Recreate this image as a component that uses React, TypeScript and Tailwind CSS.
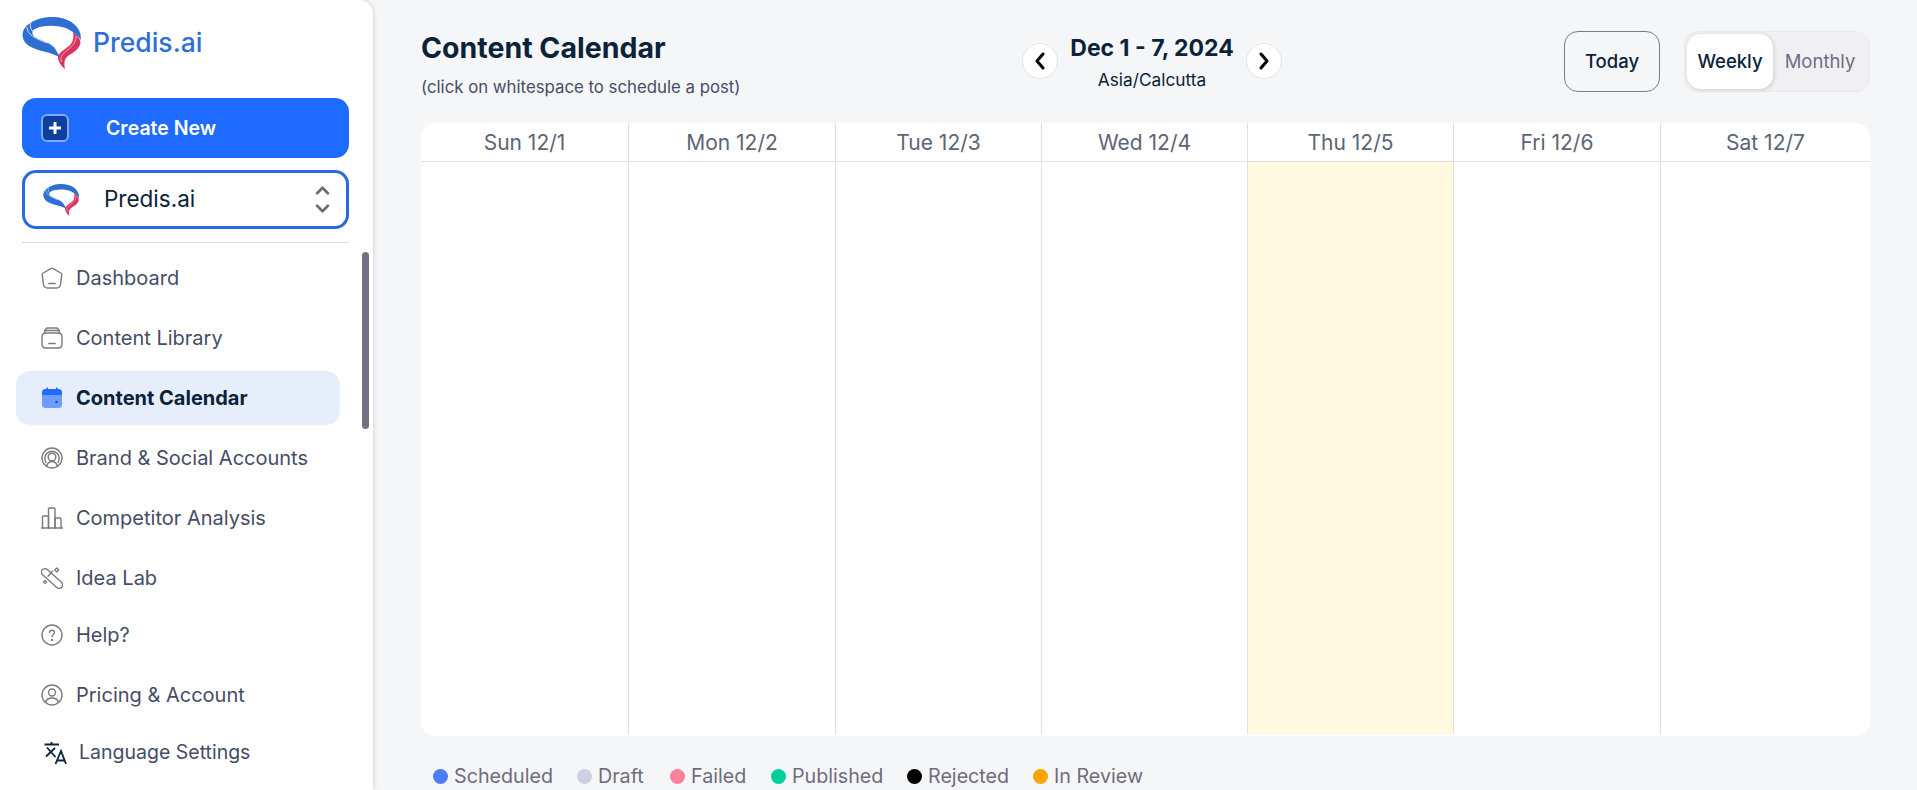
import React from "react";

const font = { fontFamily: "Inter, 'Liberation Sans', sans-serif" };

function Logo({ className }: { className: string }) {
  return (
    <svg viewBox="4 5 62 52" className={className}>
      <path d="M4.500 23C4.500 14 15 7.500 27 5.500C42 3 59 8.500 62.500 22L63 28C60 24 56 20 50 17C40 12.500 24 13 17 17C13.500 19 13.500 22 17 25C24 29 34 31 38 38L43 47C38 42 30 40.500 22 38.500C12 35.500 4.500 31 4.500 23Z" fill="#2f6fd3" />
      <path d="M9 15C9 24 20 27 29 31M13 10C9 20 22 24 33 30" stroke="#ffffff" strokeWidth="0.9" fill="none" opacity="0.85" />
      <path d="M55 20C59 23 62.500 27 62.500 31C61 38 54 41 50 44C46 47 46 51 47 57C43 54 40 49 40 45C41 40 48 37 52 33C55 30 56 25 55 20Z" fill="#d9345f" />
      <path d="M58 24C59 32 50 37 46 41C43 44 42.500 47 43.500 50" stroke="#ffffff" strokeWidth="0.8" fill="none" opacity="0.7" />
    </svg>
  );
}

const stroke = { fill: "none", stroke: "#7b7b7f", strokeWidth: 1.4, strokeLinecap: "round" as const, strokeLinejoin: "round" as const };

function NavIcon({ name }: { name: string }) {
  if (name === "dash")
    return (
      <svg viewBox="0 0 22 22" className="h-[22px] w-[22px]" {...stroke}>
        <path d="M9.800 1.600Q11 0.800 12.200 1.600L19.800 6Q21 6.800 20.700 8.200L19.500 17.500Q19 21 15.500 21H6.500Q3 21 2.500 17.500L1.300 8.200Q1 6.800 2.200 6Z" />
        <path d="M8 16.500H14" strokeWidth="1.700" />
      </svg>
    );
  if (name === "lib")
    return (
      <svg viewBox="0 0 22 22" className="h-[22px] w-[22px]" {...stroke}>
        <path d="M3.500 5.500Q4 1 7 1H15Q18 1 18.500 5.500" />
        <path d="M4 3.500H18" />
        <path d="M5 6H17Q21 6 21 10V17Q21 21 17 21H5Q1 21 1 17V10Q1 6 5 6Z" />
        <path d="M8 16.500H14" strokeWidth="1.700" />
      </svg>
    );
  if (name === "cal")
    return (
      <svg viewBox="0 0 22 22" className="h-[22px] w-[22px]">
        <path d="M1 8H21V17.500Q21 21 17.500 21H4.500Q1 21 1 17.500Z" fill="#6f9dff" />
        <path d="M1 8V5.500Q1 2 4.500 2H5.500V0.500H7V2H15V0.500H16.500V2H17.500Q21 2 21 5.500V8Z" fill="#1f6bff" />
        <circle cx="15.500" cy="15" r="1.300" fill="#1d4fc0" />
      </svg>
    );
  if (name === "brand")
    return (
      <svg viewBox="0 0 22 22" className="h-[22px] w-[22px]" {...stroke}>
        <circle cx="11" cy="11" r="10" />
        <path d="M5 15.500A7.200 7.200 0 1 1 17 15.500" />
        <circle cx="11" cy="10" r="3.800" />
        <path d="M5.500 19.500C6.500 16 8.500 14.500 11 14.500C13.500 14.500 15.500 16 16.500 19.500" />
      </svg>
    );
  if (name === "comp")
    return (
      <svg viewBox="0 0 22 22" className="h-[22px] w-[22px]" {...stroke}>
        <path d="M0.500 21H21.500" />
        <path d="M1.500 21V10Q1.500 9 2.500 9H7.500V21" />
        <path d="M7.500 21V2Q7.500 1 8.500 1H13Q14 1 14 2V21" />
        <path d="M14 21V11H19Q20 11 20 12V21" />
      </svg>
    );
  if (name === "idea")
    return (
      <svg viewBox="0 0 22 22" className="h-[22px] w-[22px]" {...stroke}>
        <rect x="-2" y="8" width="26" height="7" rx="3.500" transform="rotate(42 11 11.500)" />
        <path d="M5.500 7.500L10 2.500" transform="translate(1.500 1.800)" />
        <path d="M15.700 1L17.700 3L15.700 5L13.700 3Z" />
        <path d="M4 13.500L5.500 15L4 16.500L2.500 15Z" />
      </svg>
    );
  if (name === "help")
    return (
      <svg viewBox="0 0 22 22" className="h-[22px] w-[22px]" {...stroke}>
        <circle cx="11" cy="11" r="10" />
        <path d="M8.500 8.500C8.500 5.500 13.500 5.500 13.500 8.500C13.500 10.500 11 10.500 11 12.800" />
        <circle cx="11" cy="16" r="0.500" />
      </svg>
    );
  if (name === "price")
    return (
      <svg viewBox="0 0 22 22" className="h-[22px] w-[22px]" {...stroke}>
        <circle cx="11" cy="11" r="10" />
        <circle cx="11" cy="8.500" r="3.500" />
        <path d="M4.500 18C5.500 15 8 14 11 14C14 14 16.500 15 17.500 18" />
      </svg>
    );
  return (
    <svg viewBox="0 0 24 24" className="h-[24px] w-[24px]" fill="none" stroke="#0b2239" strokeWidth="1.800">
      <path d="M1.500 3.500H16M8.500 1V3.500M3 15.500L12 7M12.500 16L4 6.500" />
      <path d="M12.500 23L18 10L23 23M14.200 19.500H21.500" />
    </svg>
  );
}

const nav = [
  ["dash", "Dashboard", ""],
  ["lib", "Content Library", ""],
  ["cal", "Content Calendar", ""],
  ["brand", "Brand & Social Accounts", ""],
  ["comp", "Competitor Analysis", ""],
  ["idea", "Idea Lab", ""],
  ["help", "Help?", "mt-[-3px]"],
  ["price", "Pricing & Account", ""],
];

const days = ["Sun 12/1", "Mon 12/2", "Tue 12/3", "Wed 12/4", "Thu 12/5", "Fri 12/6", "Sat 12/7"];

const legend = [
  ["Scheduled", "bg-[#4a7ff7]", "w-[144px]"],
  ["Draft", "bg-[#cdd0dd]", "w-[93px]"],
  ["Failed", "bg-[#ff8099]", "w-[101px]"],
  ["Published", "bg-[#00cf9c]", "w-[136px]"],
  ["Rejected", "bg-black", "w-[126px]"],
  ["In Review", "bg-[#ffa400]", "w-auto"],
];

function Sidebar() {
  return (
    <aside className="relative flex h-[790px] w-[373px] shrink-0 flex-col rounded-tr-[14px] bg-white shadow-[1px_0_4px_rgba(0,0,0,0.12)]">
      <div className="flex h-[98px] items-start gap-[9px] pl-[22px] pt-[17px]">
        <Logo className="h-[52px] w-[62px]" />
        <span className="mt-[8px] text-[26.500px] font-medium leading-[34px] text-[#2e6fd6]">Predis.ai</span>
      </div>
      <div className="ml-[22px] mr-[24px] flex h-[60px] items-center rounded-[14px] bg-[#1f6bff] pl-[19px]">
        <span className="flex h-[28px] w-[28px] items-center justify-center rounded-[6px] border-[2px] border-[#7fa8f5] bg-[#0f3f9e]">
          <svg viewBox="0 0 12 12" className="h-[12px] w-[12px]"><path d="M6 1V11M1 6H11" stroke="#fff" strokeWidth="3" strokeLinecap="round" /></svg>
        </span>
        <span className="ml-[37px] mt-[1px] text-[19.500px] font-semibold text-white">Create New</span>
      </div>
      <div className="ml-[22px] mr-[24px] mt-[12px] flex h-[59px] items-center rounded-[14px] border-[3px] border-[#2a6ae0] pl-[18px]">
        <Logo className="h-[32px] w-[38px]" />
        <span className="ml-[23px] text-[22.500px] leading-none text-[#0b2239]">Predis.ai</span>
        <svg viewBox="0 0 16 30" className="ml-auto mr-[16px] h-[27px] w-[15px]" fill="none" stroke="#6f6f6f" strokeWidth="3" strokeLinecap="round" strokeLinejoin="round">
          <path d="M2 8L8 2L14 8M2 22L8 28L14 22" />
        </svg>
      </div>
      <div className="ml-[22px] mr-[24px] mt-[13px] h-px bg-[#d9d9dc]" />
      <nav className="mt-[5px] flex flex-col">
        {nav.map(([icon, label, extra]) => (
          <div key={label} className={`flex h-[60px] items-center ${extra}`}>
            <div className={`ml-[16px] flex h-[54px] w-[324px] items-center gap-[13px] rounded-[14px] pl-[25px] text-[20px] ${label === "Content Calendar" ? "bg-[#e6eefc] font-bold text-[#0b2239]" : "text-[#454d66]"}`}>
              <NavIcon name={icon} />
              <span>{label}</span>
            </div>
          </div>
        ))}
        <div className="mt-[3px] flex h-[50px] items-center gap-[12px] pl-[43px] text-[19.500px] text-[#454d66]">
          <NavIcon name="lang" />
          <span>Language Settings</span>
        </div>
      </nav>
      <div className="absolute left-[362px] top-[252px] h-[177px] w-[7px] rounded-full bg-[#737085]" />
    </aside>
  );
}

function Arrow({ d }: { d: string }) {
  return (
    <button className="flex h-[36px] w-[36px] items-center justify-center rounded-full border border-[#e3e4e8] bg-white">
      <svg viewBox="0 0 12 18" className="h-[18px] w-[12px]" fill="none" stroke="#000" strokeWidth="3" strokeLinecap="round" strokeLinejoin="round"><path d={d} /></svg>
    </button>
  );
}

function Main() {
  return (
    <main className="flex h-[790px] flex-1 flex-col overflow-hidden pl-[48px] pr-[47px]">
      <header className="relative flex h-[123px] items-start">
        <div className="pt-[29px]">
          <h1 className="text-[28.500px] font-bold leading-[38px] text-[#0b2239]">Content Calendar</h1>
          <p className="mt-[9px] text-[16.800px] leading-[22px] text-[#454d66]">(click on whitespace to schedule a post)</p>
        </div>
        <div className="absolute left-[601px] top-[29px] flex w-[260px] items-center justify-between">
          <Arrow d="M9 2L3 9L9 16" />
          <div className="text-center">
            <div className="text-[23px] font-bold leading-[38px] text-[#0b2239]">Dec 1 - 7, 2024</div>
            <div className="text-[17.300px] leading-[26px] text-[#0b2239]">Asia/Calcutta</div>
          </div>
          <Arrow d="M3 2L9 9L3 16" />
        </div>
        <div className="ml-auto mt-[31px] flex items-center gap-[24px]">
          <button className="h-[61px] w-[96px] rounded-[14px] border border-[#6f7f90] text-[18.500px] font-medium text-[#0b2239]">Today</button>
          <div className="flex h-[61px] w-[186px] items-center rounded-[14px] border border-[#ebebef] bg-[#f0f0f4] pl-[2px]">
            <span className="flex h-[55px] w-[86px] items-center justify-center rounded-[14px] bg-white text-[18.500px] font-medium text-[#0b2239] shadow-[1px_1px_4px_rgba(0,0,0,0.15)]">Weekly</span>
            <span className="flex-1 pr-[2px] text-center text-[18.500px] text-[#6f6c80]">Monthly</span>
          </div>
        </div>
      </header>
      <section className="flex h-[613px] shrink-0 flex-col rounded-[14px] bg-white">
        <div className="grid h-[39px] grid-cols-[208px_207px_206px_206px_206px_207px_1fr] border-b border-[#dfe0e3]">
          {days.map((d, i) => (
            <div key={d} className={`flex items-center justify-center pt-[1px] text-[21px] text-[#5d6476] ${i < 6 ? "border-r border-[#dfe0e3]" : ""}`}>{d}</div>
          ))}
        </div>
        <div className="mb-[2px] grid flex-1 grid-cols-[208px_207px_206px_206px_206px_207px_1fr]">
          {days.map((d, i) => (
            <div key={d} className={`${i < 6 ? "border-r border-[#dfe0e3]" : ""} ${i === 4 ? "bg-[#fff9e0]" : ""}`} />
          ))}
        </div>
      </section>
      <div className="mt-[30px] flex items-center pl-[12px]">
        {legend.map(([label, color, w]) => (
          <div key={label} className={`flex items-center gap-[6px] text-[19.700px] leading-[20px] text-[#6f6c80] ${w}`}>
            <span className={`h-[15px] w-[15px] rounded-full ${color}`} />
            <span>{label}</span>
          </div>
        ))}
      </div>
    </main>
  );
}

export default function App() {
  return (
    <div className="flex h-[790px] w-[1917px] overflow-hidden bg-[#f5f6f8]" style={font}>
      <Sidebar />
      <Main />
    </div>
  );
}
